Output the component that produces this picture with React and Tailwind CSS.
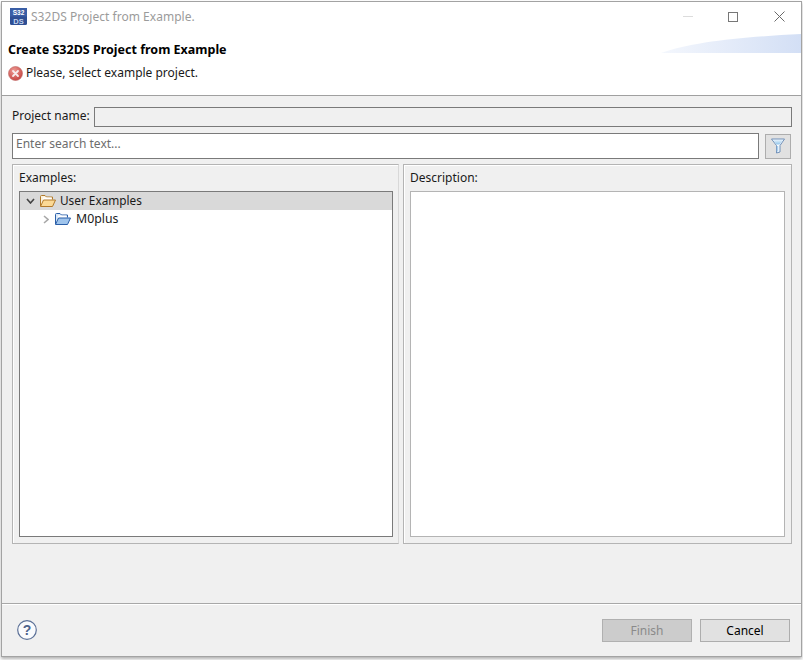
function Logo() {
  return (
    <svg width="17" height="17" viewBox="0 0 17 17" className="shrink-0">
      <rect x="0" y="0" width="17" height="17" rx="1.5" fill="#2f4f94" />
      <rect x="0" y="0" width="17" height="8.5" fill="#3a5ea6" />
      <text x="8.5" y="6.8" textAnchor="middle" fontSize="6.5" fontWeight="700" fill="#fff" fontFamily="Liberation Sans">S32</text>
      <text x="8.5" y="15.6" textAnchor="middle" fontSize="7.5" fontWeight="700" fill="#c3d6ef" fontFamily="Liberation Sans">DS</text>
    </svg>
  );
}

function ErrorIcon() {
  return (
    <svg width="15" height="15" viewBox="0 0 15 15" className="shrink-0">
      <defs>
        <radialGradient id="er" cx="40%" cy="30%" r="75%">
          <stop offset="0" stopColor="#ee9a94" />
          <stop offset="1" stopColor="#c4413e" />
        </radialGradient>
      </defs>
      <circle cx="7.5" cy="7.5" r="7" fill="url(#er)" stroke="#bd6a66" strokeWidth="0.6" />
      <path d="M5 5 L10 10 M10 5 L5 10" stroke="#f7ecec" strokeWidth="1.8" strokeLinecap="round" />
    </svg>
  );
}

function Folder({ blue }) {
  const back = blue ? "#2b5fa8" : "#b27a2b";
  const front = blue ? "#9fc4ec" : "#fbd995";
  return (
    <svg width="16" height="12" viewBox="0 0 16 12" className="shrink-0">
      <path d="M0.5 11 V1.5 Q0.5 0.5 1.5 0.5 H5 L6.5 2 H12.5 V4.5" fill={blue ? "#dbe9f8" : "#fbf1dc"} stroke={back} strokeWidth="1" />
      <rect x="3" y="2.5" width="8.5" height="2.5" fill="#fff" />
      <path d="M0.5 11.5 L3.5 5 H15.5 L12.5 11.5 Z" fill={front} stroke={back} strokeWidth="1" strokeLinejoin="round" />
    </svg>
  );
}

function Filter() {
  return (
    <svg width="14" height="16" viewBox="0 0 14 16">
      <defs>
        <linearGradient id="fl" x1="0" y1="0" x2="0" y2="1">
          <stop offset="0" stopColor="#e4f1fb" />
          <stop offset="1" stopColor="#8fc4ea" />
        </linearGradient>
      </defs>
      <path d="M0.5 1 H13.5 L9 7.5 V14 L5.5 15 V7.5 Z" fill="#f7fbfe" stroke="#6f8fb8" strokeWidth="1" strokeLinejoin="round" />
      <path d="M2 2 H12 L8.5 6.5 H5.5 Z" fill="url(#fl)" />
      <path d="M6.5 8 V13.5" stroke="#a9cfee" strokeWidth="1.5" />
    </svg>
  );
}

function Help() {
  return (
    <svg width="20" height="20" viewBox="0 0 20 20">
      <circle cx="10" cy="10" r="9.3" fill="#fafbfd" stroke="#5b7097" strokeWidth="1.2" />
      <text x="10" y="15" textAnchor="middle" fontSize="14" fontWeight="700" fill="#4f648c" fontFamily="Liberation Sans">?</text>
    </svg>
  );
}

export default function App() {
  return (
    <div className="w-[803px] h-[660px] bg-white overflow-hidden font-['Noto_Sans','Open_Sans',sans-serif] text-[12px] text-[#1a1a1a]">
      <div className="w-[801px] h-[656px] ml-px mt-px border border-[#a3a3a3] bg-[#f0f0f0] flex flex-col shadow-[0_2px_3px_rgba(0,0,0,0.3)]">
        {/* header */}
        <div className="relative h-[93px] shrink-0 bg-white border-b border-[#a0a0a0] box-content">
          <div className="flex items-center h-[29px] pl-[8px] gap-[4px]">
            <Logo />
            <span className="text-[12px] text-[#9b9b9b] tracking-[0.03px]">S32DS Project from Example.</span>
            <div className="ml-auto flex items-center">
              <div className="w-[10px] h-px bg-[#dcdcdc] mr-[35px]" />
              <div className="w-[10px] h-[10px] border border-[#777] mr-[36px]" />
              <svg width="11" height="11" viewBox="0 0 11 11" className="mr-[16px]">
                <path d="M0.5 0.5 L10.5 10.5 M10.5 0.5 L0.5 10.5" stroke="#6a6a6a" strokeWidth="1" />
              </svg>
            </div>
          </div>
          <div className="pl-[6px] mt-[11px] font-bold text-[12.5px] leading-[16px] text-black">Create S32DS Project from Example</div>
          <div className="flex items-center pl-[6px] mt-[7px] gap-[3px] leading-[16px]">
            <ErrorIcon />
            <span>Please, select example project.</span>
          </div>
          <svg className="absolute right-0 top-[30px]" width="140" height="22" viewBox="0 0 140 22">
            <defs>
              <linearGradient id="sw" x1="0" y1="0" x2="1" y2="0">
                <stop offset="0" stopColor="#f4f7fd" />
                <stop offset="1" stopColor="#d3dff5" />
              </linearGradient>
            </defs>
            <path d="M0 21 C 30 10, 80 5, 140 2 V21 Z" fill="url(#sw)" />
          </svg>
        </div>
        {/* body */}
        <div className="flex-1 flex flex-col pl-[10px] pr-[9px] pt-[11px] min-h-0">
          <div className="flex items-center h-[20px] gap-[5px]">
            <span className="w-[77px] shrink-0 whitespace-nowrap pb-[3px]">Project name:</span>
            <div className="flex-1 h-[20px] border border-[#7a7a7a] bg-[#f0f0f0]" />
          </div>
          <div className="flex items-center mt-[6px] gap-[6px] pr-px">
            <div className="flex-1 h-[26px] border border-[#7a7a7a] bg-white pl-[3px] flex items-center text-[#6d6d6d] pb-[4px]">Enter search text...</div>
            <div className="w-[26px] h-[25px] border border-[#adadad] bg-[#e1e1e1] flex items-center justify-center">
              <Filter />
            </div>
          </div>
          <div className="flex mt-[5px] gap-[4px] h-[380px]">
            <div className="w-[387px] border border-[#b4b4b4] border-r-[#d8d8d8] pl-[6px] pr-[5px] pb-[6px] flex flex-col shadow-[inset_1px_1px_0_#fff]">
              <div className="h-[26px] flex items-center pb-[1px]">Examples:</div>
              <div className="flex-1 border border-[#7a7a7a] bg-white">
                <div className="h-[18px] bg-[#d9d9d9] flex items-center pl-[6px] gap-[5px]">
                  <svg width="9" height="6" viewBox="0 0 9 6" className="shrink-0"><path d="M1 1 L4.5 5 L8 1" fill="none" stroke="#444" strokeWidth="1.6" /></svg>
                  <Folder />
                  <span className="-ml-px text-[11.8px]">User Examples</span>
                </div>
                <div className="h-[18px] flex items-center pl-[23px] gap-[6px]">
                  <svg width="6" height="9" viewBox="0 0 6 9" className="shrink-0"><path d="M1 1 L5 4.5 L1 8" fill="none" stroke="#a8a8a8" strokeWidth="1.6" /></svg>
                  <Folder blue />
                  <span className="-ml-px text-[12.3px]">M0plus</span>
                </div>
              </div>
            </div>
            <div className="w-[389px] border border-[#b4b4b4] px-[6px] pb-[6px] flex flex-col shadow-[inset_1px_1px_0_#fff]">
              <div className="h-[26px] flex items-center pb-[1px]">Description:</div>
              <div className="flex-1 border border-[#b4b4b4] bg-white" />
            </div>
          </div>
        </div>
        {/* footer */}
        <div className="h-[53px] shrink-0 border-t border-[#a8a8a8] shadow-[inset_0_1px_0_#fff] flex items-center pl-[15px] pr-[11px] pt-[1px]">
          <div className="mb-[1px] flex"><Help /></div>
          <div className="ml-auto flex gap-[8px]">
            <div className="w-[90px] h-[23px] border border-[#b0b0b0] bg-[#cccccc] text-[#8a8a8a] flex items-center justify-center">Finish</div>
            <div className="w-[90px] h-[23px] border border-[#adadad] bg-[#e1e1e1] text-black flex items-center justify-center">Cancel</div>
          </div>
        </div>
      </div>
    </div>
  );
}
